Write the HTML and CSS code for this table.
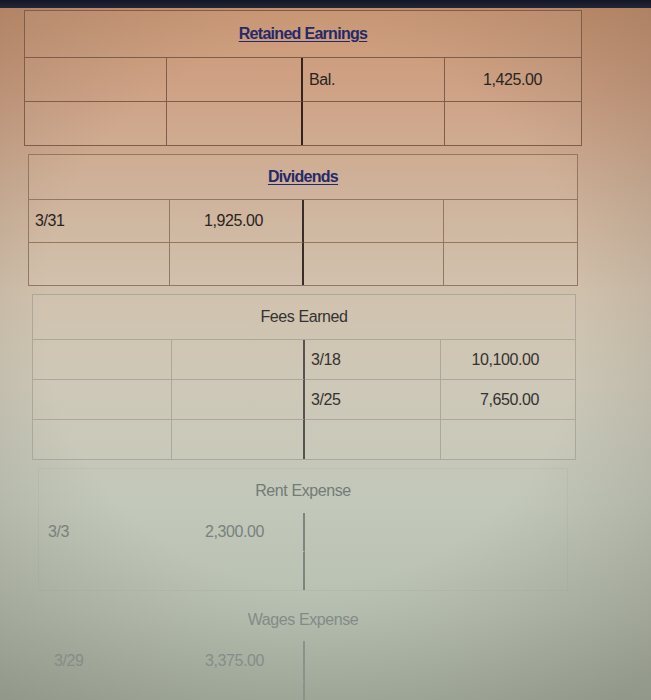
FILE: index.html
```html
<!DOCTYPE html>
<html>
<head>
<meta charset="utf-8">
<link rel="stylesheet" href="styles.css">
</head>
<body>
<div class="topbar"></div>
<main class="page">
  <section class="account acc-re">
    <div class="head"><a class="title link" href="#">Retained Earnings</a></div>
    <div class="grid">
      <div class="cell"></div><div class="cell mid"></div><div class="cell">Bal.</div><div class="cell num">1,425.00</div>
      <div class="cell"></div><div class="cell mid"></div><div class="cell"></div><div class="cell num"></div>
    </div>
  </section>
  <section class="account acc-div">
    <div class="head"><a class="title link" href="#">Dividends</a></div>
    <div class="grid">
      <div class="cell">3/31</div><div class="cell mid num">1,925.00</div><div class="cell"></div><div class="cell num"></div>
      <div class="cell"></div><div class="cell mid"></div><div class="cell"></div><div class="cell num"></div>
    </div>
  </section>
  <section class="account acc-fees">
    <div class="head"><span class="title">Fees Earned</span></div>
    <div class="grid">
      <div class="cell"></div><div class="cell mid"></div><div class="cell">3/18</div><div class="cell num">10,100.00</div>
      <div class="cell"></div><div class="cell mid"></div><div class="cell">3/25</div><div class="cell num">7,650.00</div>
      <div class="cell"></div><div class="cell mid"></div><div class="cell"></div><div class="cell num"></div>
    </div>
  </section>
  <section class="account acc-rent">
    <div class="head"><span class="title">Rent Expense</span></div>
    <div class="grid">
      <div class="cell">3/3</div><div class="cell mid num">2,300.00</div><div class="cell"></div><div class="cell num"></div>
      <div class="cell"></div><div class="cell mid"></div><div class="cell"></div><div class="cell num"></div>
    </div>
  </section>
  <section class="account acc-wages">
    <div class="head"><span class="title">Wages Expense</span></div>
    <div class="grid">
      <div class="cell">3/29</div><div class="cell mid num">3,375.00</div><div class="cell"></div><div class="cell num"></div>
      <div class="cell"></div><div class="cell mid"></div><div class="cell"></div><div class="cell num"></div>
    </div>
  </section>
</main>
</body>
</html>
```

FILE: styles.css
```css
html, body {
  margin: 0;
  padding: 0;
  height: 700px;
  overflow: hidden;
}
body {
  font-family: "Liberation Sans", Arial, sans-serif;
  font-size: 16px;
  color: #2a2420;
  background:
    radial-gradient(ellipse 75% 70% at 48% 45%, rgba(255,255,255,0) 55%, rgba(70,60,50,0.24) 100%),
    linear-gradient(180deg, #c8936f 0%, #cc9d7f 12%, #cdb098 28%, #cfc0ac 42%, #cbc6b6 55%, #c2c8ba 72%, #b7c0b2 88%, #aab5a6 100%);
}
.topbar {
  height: 8px;
  background: linear-gradient(180deg, #121626, #232634);
}
.page {
  display: flex;
  flex-direction: column;
  gap: 8px;
  padding-top: 2px;
}
.account {
  border: 1px solid #7e5e4a;
  background: rgba(255, 240, 225, 0.06);
}
.head {
  display: flex;
  align-items: center;
  justify-content: center;
  border-bottom: 1px solid #7e5e4a;
}
.title {
  font-size: 16px;
  letter-spacing: -0.4px;
}
.link {
  color: #262968;
  font-weight: bold;
  text-decoration: underline;
  text-underline-offset: 2px;
  letter-spacing: -0.7px;
}
.grid {
  display: grid;
  grid-template-columns: 143fr 136fr 143fr 136fr;
}
.cell {
  display: flex;
  align-items: center;
  padding: 0 6px;
  border-right: 1px solid #7e5e4a;
  border-bottom: 1px solid #7e5e4a;
  letter-spacing: -0.4px;
}
.cell:nth-child(4n) {
  border-right: none;
}
.grid .cell:nth-last-child(-n+4) {
  border-bottom: none;
}
.cell.mid {
  border-right: 2px solid #33241c;
}
.num {
  justify-content: flex-end;
  padding-right: 39px;
}

/* Retained Earnings */
.acc-re {
  margin: 0 69px 0 24px;
}
.acc-re .head { height: 46px; }
.acc-re .cell { height: 43px; }

/* Dividends */
.acc-div {
  margin: 0 73px 0 28px;
  border-color: #937763;
}
.acc-div .head, .acc-div .cell { border-color: #937763; }
.acc-div .cell.mid { border-right-color: #3a2c26; }
.acc-div .head { height: 44px; }
.acc-div .cell { height: 42px; }
.acc-div .grid { grid-template-columns: 142fr 134fr 141fr 133fr; }

/* Fees Earned */
.acc-fees {
  margin: 0 75px 0 32px;
  border-color: #ada79b;
  color: #343331;
}
.acc-fees .head, .acc-fees .cell { border-color: #ada79b; }
.acc-fees .cell.mid { border-right-color: #57524d; }
.acc-fees .head { height: 44px; }
.acc-fees .cell { height: 39px; }
.acc-fees .grid { grid-template-columns: 140fr 133fr 137fr 134fr; }
.acc-fees .num { padding-right: 36px; }

/* Rent Expense */
.acc-rent {
  margin: 0 83px 0 38px;
  border-color: rgba(150, 160, 148, 0.18);
  background: transparent;
  color: #7a817c;
}
.acc-rent .head { height: 43px; border-color: transparent; }
.acc-rent .cell { height: 38px; border-color: transparent; }
.acc-rent .cell.mid { border-right-color: #7d8580; }
.acc-rent .grid { grid-template-columns: 144fr 123fr 131fr 132fr; }
.acc-rent .title { color: #737b77; }
.acc-rent .cell:first-child { padding-left: 9px; }

/* Wages Expense */
.acc-wages {
  margin: 0 87px 0 42px;
  border-color: transparent;
  background: transparent;
  color: #858d88;
}
.acc-wages .head { height: 40px; border-color: transparent; }
.acc-wages .cell { height: 40px; border-color: transparent; }
.acc-wages .cell.mid { border-right-color: #8a928d; }
.acc-wages .grid { grid-template-columns: 140fr 123fr 131fr 128fr; }
.acc-wages .title { color: #838b87; }
.acc-wages .cell:first-child { padding-left: 11px; }
```
